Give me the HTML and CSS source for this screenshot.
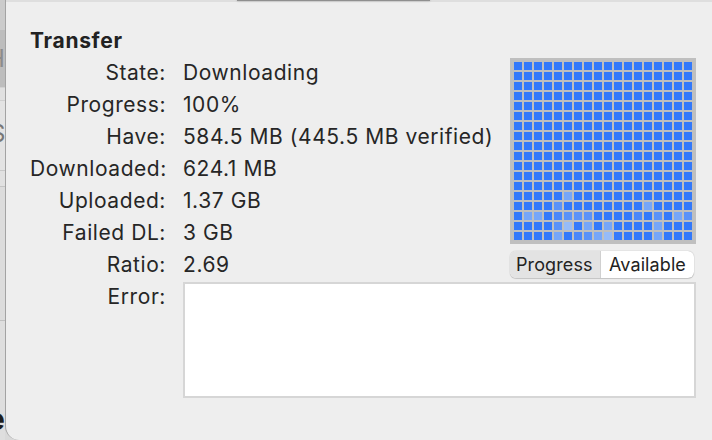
FILE: index.html
```html
<!DOCTYPE html>
<html lang="en">
<head>
<meta charset="utf-8">
<title>Transfer</title>
<link rel="stylesheet" href="styles.css">
</head>
<body>
<div class="strip">
  <div class="seg seg-a"></div>
  <div class="seg seg-b"><span class="frag frag-h">H</span></div>
  <div class="seg seg-c"></div>
  <div class="seg seg-d"><span class="frag frag-s">S</span></div>
  <div class="seg seg-e"></div>
  <div class="seg seg-f"></div>
  <div class="seg seg-g"></div>
  <div class="seg seg-h"><span class="frag frag-e">e</span></div>
</div>
<main class="window">
  <div class="top-edge"><div class="top-shadow"></div></div>
  <h2 class="title">Transfer</h2>
  <div class="info">
    <div class="label">State:</div><div class="value">Downloading</div>
    <div class="side">
      <div class="pieces">
        <i></i><i></i><i></i><i></i><i></i><i></i><i></i><i></i><i></i><i></i><i></i><i></i><i></i><i></i><i></i><i></i><i></i><i></i>
        <i></i><i></i><i></i><i></i><i></i><i></i><i></i><i></i><i></i><i></i><i></i><i></i><i></i><i></i><i></i><i></i><i></i><i></i>
        <i></i><i></i><i></i><i></i><i></i><i></i><i></i><i></i><i></i><i></i><i></i><i></i><i></i><i></i><i></i><i></i><i></i><i></i>
        <i></i><i></i><i></i><i></i><i></i><i></i><i></i><i></i><i></i><i></i><i></i><i></i><i></i><i></i><i></i><i></i><i></i><i></i>
        <i></i><i></i><i></i><i></i><i></i><i></i><i></i><i></i><i></i><i></i><i></i><i></i><i></i><i></i><i></i><i></i><i></i><i></i>
        <i></i><i></i><i></i><i></i><i></i><i></i><i></i><i></i><i></i><i></i><i></i><i></i><i></i><i></i><i></i><i></i><i></i><i></i>
        <i></i><i></i><i></i><i></i><i></i><i></i><i></i><i></i><i></i><i></i><i></i><i></i><i></i><i></i><i></i><i></i><i></i><i></i>
        <i></i><i></i><i></i><i></i><i></i><i></i><i></i><i></i><i></i><i></i><i></i><i></i><i></i><i></i><i></i><i></i><i></i><i></i>
        <i></i><i></i><i></i><i></i><i></i><i></i><i></i><i></i><i></i><i></i><i></i><i></i><i></i><i></i><i></i><i></i><i></i><i></i>
        <i></i><i></i><i></i><i></i><i></i><i></i><i></i><i></i><i></i><i></i><i></i><i></i><i></i><i></i><i></i><i></i><i></i><i></i>
        <i></i><i></i><i></i><i></i><i></i><i></i><i></i><i></i><i></i><i></i><i></i><i></i><i></i><i></i><i></i><i></i><i></i><i></i>
        <i></i><i></i><i></i><i></i><i></i><i></i><i></i><i></i><i></i><i></i><i></i><i></i><i></i><i></i><i></i><i></i><i></i><i></i>
        <i></i><i></i><i></i><i></i><i></i><i></i><i></i><i></i><i></i><i></i><i></i><i></i><i></i><i></i><i></i><i></i><i></i><i></i>
        <i></i><i></i><i></i><i></i><i></i><i class="l3"></i><i></i><i></i><i></i><i></i><i></i><i></i><i></i><i></i><i></i><i></i><i></i><i></i>
        <i></i><i></i><i></i><i></i><i class="l2"></i><i></i><i></i><i></i><i></i><i></i><i></i><i></i><i></i><i class="l3"></i><i></i><i></i><i></i><i></i>
        <i></i><i class="l3"></i><i class="l3"></i><i></i><i class="l1"></i><i class="l2"></i><i class="l2"></i><i class="l2"></i><i></i><i></i><i></i><i></i><i class="l1"></i><i></i><i class="l2"></i><i></i><i class="l3"></i><i class="l2"></i>
        <i></i><i></i><i></i><i></i><i class="l2"></i><i class="l4"></i><i></i><i class="l3"></i><i></i><i class="l3"></i><i></i><i></i><i></i><i></i><i class="l3"></i><i></i><i></i><i></i>
        <i></i><i></i><i></i><i></i><i class="l3"></i><i></i><i class="l1"></i><i class="l2"></i><i class="l3"></i><i class="l4"></i><i></i><i></i><i></i><i></i><i class="l3"></i><i></i><i></i><i></i>
      </div>
      <div class="segmented">
        <div class="segment segment-on">Progress</div>
        <div class="segment">Available</div>
      </div>
    </div>
    <div class="label">Progress:</div><div class="value">100%</div>
    <div class="label">Have:</div><div class="value">584.5 MB (445.5 MB verified)</div>
    <div class="label">Downloaded:</div><div class="value">624.1 MB</div>
    <div class="label">Uploaded:</div><div class="value">1.37 GB</div>
    <div class="label">Failed DL:</div><div class="value">3 GB</div>
    <div class="label">Ratio:</div><div class="value">2.69</div>
    <div class="label">Error:</div><div class="error-box"></div>
  </div>
</main>
</body>
</html>
```
FILE: styles.css
```css
* { box-sizing: border-box; }
html, body { margin: 0; padding: 0; }
body {
  width: 712px;
  height: 440px;
  overflow: hidden;
  display: flex;
  background: #d9d9d9;
  font-family: Inter, "Liberation Sans", sans-serif;
  color: #262626;
}
.strip {
  width: 5px;
  flex: none;
  display: flex;
  flex-direction: column;
  overflow: hidden;
}
.seg { overflow: hidden; position: relative; flex: none; }
.seg-a { height: 30px; background: #cbcbcb; }
.seg-b { height: 57px; background: #bdbdbd; }
.seg-c { height: 13px; background: #e0e0e0; border-top: 1px solid #d2d2d2; }
.seg-d { height: 70px; background: #e3e3e3; border-top: 1px solid #cfcfcf; }
.seg-e { height: 16px; background: #e1e1e1; border-top: 1px solid #c8c8c8; }
.seg-f { height: 134px; background: #dcdcdc; border-top: 1px solid #c4c4c4; }
.seg-g { height: 90px; background: #dedede; border-top: 1px solid #c0c0c0; }
.seg-h { height: 30px; background: #dedede; }
.frag { position: absolute; line-height: 1; font-size: 24px; }
.frag-h { left: -13px; top: 17px; color: #8c8c8c; }
.frag-s { left: -10px; top: 21px; color: #777; }
.frag-e { left: -13px; top: -6px; color: #1d1d1d; font-weight: 700; font-size: 30px; }
.window {
  flex: 1;
  position: relative;
  background: #eeeeee;
  border-left: 1px solid #a3a3a3;
  border-bottom-left-radius: 14px;
  padding: 27px 0 0 24px;
}
.top-edge {
  position: absolute;
  left: 0;
  right: 0;
  top: 0;
  height: 2px;
  background: #dedede;
}
.top-shadow {
  position: absolute;
  left: 231px;
  width: 193px;
  top: 0;
  height: 1px;
  background: #8f8f8f;
  box-shadow: 0 0 2px #8f8f8f;
}
.title {
  margin: 0;
  height: 29px;
  font-size: 21px;
  line-height: 27px;
  letter-spacing: 0.7px;
  font-weight: 700;
  color: #222;
}
.info {
  display: grid;
  grid-template-columns: 136px 310px 186px;
  grid-auto-rows: 32px;
  column-gap: 17px;
  font-size: 21px;
  letter-spacing: 0.57px;
  line-height: 32px;
}
.label { grid-column: 1; padding-top: 1px; text-align: right; white-space: nowrap; }
.value { grid-column: 2; padding-top: 1px; white-space: nowrap; }
.side {
  grid-column: 3;
  grid-row: 1 / span 7;
  margin-top: 2px;
  display: flex;
  flex-direction: column;
}
.pieces {
  width: 186px;
  height: 186px;
  padding: 4px;
  background: #bfbfbf;
  display: grid;
  grid-template-columns: repeat(18, 8px);
  grid-auto-rows: 8px;
  gap: 2px;
}
.pieces i { display: block; background: #3379fb; }
.pieces i.l1 { background: #4a87fa; }
.pieces i.l2 { background: #5a92f9; }
.pieces i.l3 { background: #76a6f9; }
.pieces i.l4 { background: #96bbf8; }
.segmented {
  margin-top: 7px;
  width: 184px;
  height: 27px;
  display: flex;
  border-radius: 6px;
  overflow: hidden;
  background: #fff;
  box-shadow: 0 0 1px rgba(0,0,0,.35), 0 1px 1px rgba(0,0,0,.15);
  font-size: 18px;
  letter-spacing: 0.1px;
  line-height: 27px;
  color: #222;
}
.segment { flex: 0 0 auto; padding: 0 8px; white-space: nowrap; }
.segment-on { width: 91px; padding: 0 6px; background: #e3e3e3; border-right: 1px solid #d0d0d0; }
.error-box {
  grid-column: 2 / span 2;
  height: 116px;
  margin-top: 2px;
  background: #fff;
  border: 2px solid #d6d6d6;
}
```
